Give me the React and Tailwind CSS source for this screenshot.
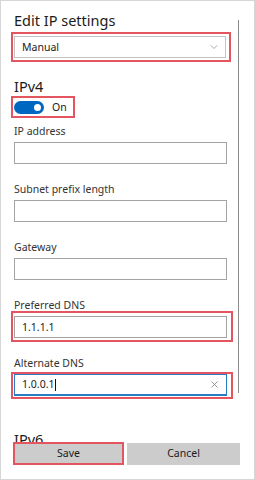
import { ChevronDown, X } from 'lucide-react';

const font = { fontFamily: '"Noto Sans", "Open Sans", Arial, sans-serif' };

const Field = ({ label, className = 'mt-[19px]' }) => (
  <div className={className}>
    <div className="h-[12px] text-[10.5px] leading-[12px] text-[#333]">{label}</div>
    <div className="mt-[5px] h-[22px] w-[213px] border border-[#a3a3a3] bg-white" />
  </div>
);

const App = () => {
  return (
    <div
      className="relative h-[480px] w-[255px] overflow-hidden border border-[#d6d6d6] bg-white text-[#1b1b1b]"
      style={font}
    >
      <div className="pl-[13px] pt-[9px]">
        <div className="h-[20px] text-[14.5px] leading-[20px]">Edit IP settings</div>

        {/* mode dropdown */}
        <div className="-ml-[3px] mt-[2px] w-fit border-2 border-[#e4555f] px-[1px] py-[2px] pr-[3px]">
          <div className="flex h-[22px] w-[212px] items-center justify-between border border-[#c4c4c4] bg-white pl-[7px] pr-[5px]">
            <span className="text-[10.5px] leading-none">Manual</span>
            <ChevronDown size={12} strokeWidth={1.25} className="text-[#777]" />
          </div>
        </div>

        <div className="mt-[15px] h-[19px] text-[14.5px] leading-[19px]">IPv4</div>

        {/* toggle */}
        <div className="-ml-[3px] flex w-fit items-center border-2 border-[#e4555f] pb-[2px] pl-[1px] pr-[6px] pt-[3px]">
          <div className="relative h-[13px] w-[30px] rounded-full bg-[#0067c0]">
            <div className="absolute right-[3px] top-[3px] h-[7px] w-[7px] rounded-full bg-white" />
          </div>
          <span className="ml-[8px] text-[10.5px] leading-[13px]">On</span>
        </div>

        <Field label="IP address" className="mt-[7px]" />
        <Field label="Subnet prefix length" />
        <Field label="Gateway" />

        {/* preferred dns */}
        <div className="mt-[19px]">
          <div className="h-[12px] text-[10.5px] leading-[12px] text-[#333]">Preferred DNS</div>
          <div className="-ml-[3px] w-fit border-2 border-[#e4555f] pb-[2px] pl-[1px] pr-[4px] pt-[3px]">
            <div className="flex h-[22px] w-[213px] items-center border border-[#a3a3a3] bg-white pl-[7px]">
              <span className="text-[10.5px] leading-none">1.1.1.1</span>
            </div>
          </div>
        </div>

        {/* alternate dns */}
        <div className="mt-[15px]">
          <div className="h-[12px] text-[10.5px] leading-[12px] text-[#333]">Alternate DNS</div>
          <div className="-ml-[3px] mt-[3px] w-fit border-2 border-[#e4555f] pb-[1px] pl-[1px] pr-[4px]">
            <div className="flex h-[22px] w-[213px] items-center justify-between border border-b-2 border-[#2a7cc4] bg-white pl-[7px] pr-[6px]">
              <span className="flex items-center text-[10.5px] leading-none">
                1.0.0.1
                <span className="ml-[1px] inline-block h-[12px] w-px bg-[#111]" />
              </span>
              <X size={11} strokeWidth={1.5} className="text-[#666]" />
            </div>
          </div>
        </div>

        <div className="mt-[30px] h-[20px] text-[14.5px] leading-[20px]">IPv6</div>
      </div>

      {/* scrollbar */}
      <div className="absolute left-[237px] top-[19px] h-[373px] w-px bg-[#8c8c8c]" />

      {/* buttons */}
      <div className="absolute left-[12px] top-[441px] flex items-start gap-[3px]">
        <button className="flex h-[23px] w-[111px] items-center justify-center border-2 border-[#e4555f] bg-[#cccccc] text-[10.5px] text-[#1b1b1b]">
          Save
        </button>
        <button className="mt-[1px] flex h-[22px] w-[113px] items-center justify-center bg-[#cccccc] text-[10.5px] text-[#1b1b1b]">
          Cancel
        </button>
      </div>
    </div>
  );
};

export default App;
